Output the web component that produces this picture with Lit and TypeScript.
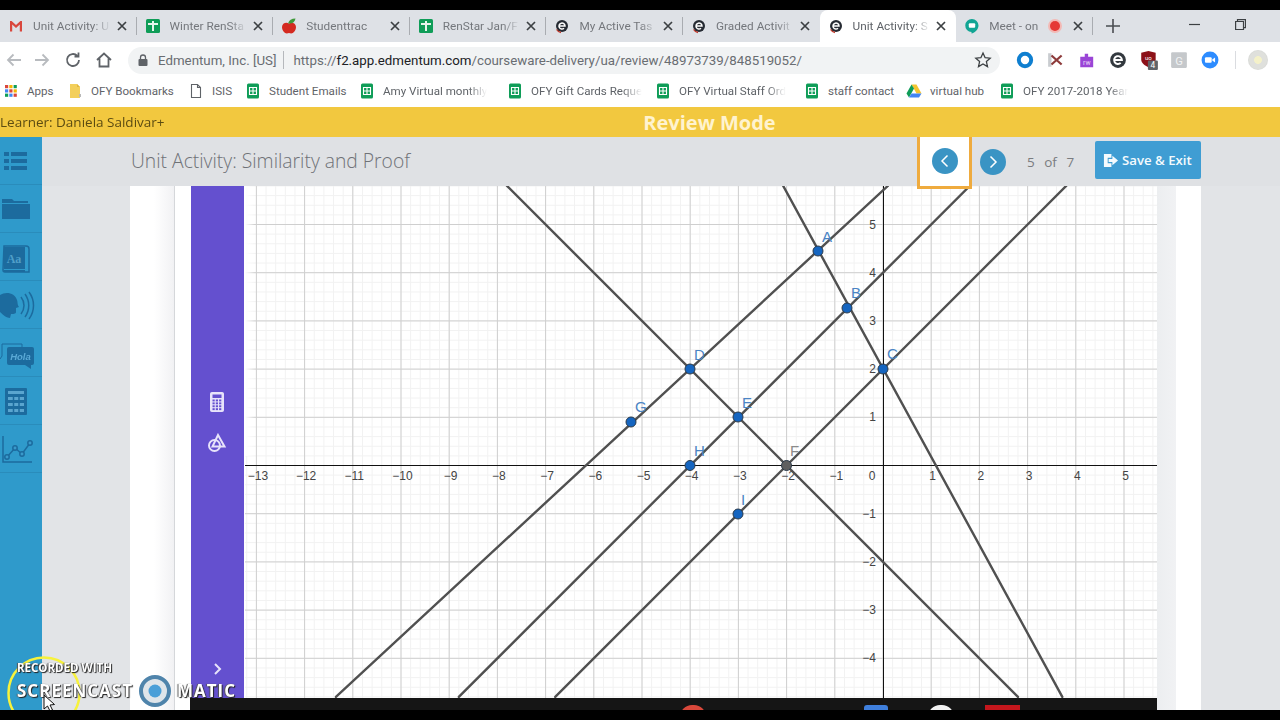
import { LitElement, html, css, svg } from 'lit';
import { customElement } from 'lit/decorators.js';

const sheetTab = svg`<svg viewBox="0 0 16 16" width="16" height="16"><rect x="1" y="1" width="14" height="14" rx="1.5" fill="#0f9d58"/><path d="M3 5h4V3h2v2h4v2H9v6H7V7H3z" fill="#e6f5ec"/></svg>`;
const sheetMark = svg`<svg viewBox="0 0 16 16" width="16" height="16"><rect x="2" y="0.5" width="12" height="15" rx="1.5" fill="#0f9d58"/><path d="M4.5 4.5h7v7h-7zM4.5 8h7M8 4.5v7" fill="none" stroke="#fff" stroke-width="1.1"/></svg>`;
const gmail = svg`<svg viewBox="0 0 16 16" width="16" height="16"><path d="M2 13.5V3h1.6L8 7l4.4-4H14v10.5h-2.2V6.6L8 10 4.2 6.6v6.9z" fill="#d9473d"/></svg>`;
const apple = svg`<svg viewBox="0 0 16 16" width="16" height="16"><path d="M8 5.5C5.5 3.8 1 5 1 9c0 3.4 2.600 6.500 4.800 6.500.9 0 1.400-.4 2.200-.4s1.300.4 2.200.4c2.200 0 4.800-3.100 4.800-6.500 0-4-4.500-5.200-7-3.500z" fill="#d42a20"/><path d="M7 5.500C8 2 10.500.5 14.500.5c-.5 3.500-3 5.500-7.500 5z" fill="#3f9a3a"/></svg>`;
const edm = svg`<svg viewBox="0 0 16 16" width="16" height="16"><circle cx="8" cy="8" r="6" fill="#262b33"/><path d="M5 8h6a3 3 0 1 0-1 2.300" fill="none" stroke="#fff" stroke-width="1.500"/><path d="M2.500 11.500a6.800 6.800 0 0 0 4.500 3" fill="none" stroke="#c0392b" stroke-width="1.300"/></svg>`;
const meet = svg`<svg viewBox="0 0 16 16" width="16" height="16"><path d="M8 1a6.500 6.500 0 0 1 6.500 6.500C14.500 12 10 15 7.500 15.500V14A6.500 6.500 0 0 1 8 1z" fill="#12a594"/><rect x="4.800" y="5.200" width="6.400" height="4.600" rx="1" fill="#fff"/></svg>`;

const tabs = [
  { icon: gmail, title: 'Unit Activity: U' },
  { icon: sheetTab, title: 'Winter RenSta' },
  { icon: apple, title: 'Studenttrac' },
  { icon: sheetTab, title: 'RenStar Jan/F' },
  { icon: edm, title: 'My Active Tas' },
  { icon: edm, title: 'Graded Activit' },
  { icon: edm, title: 'Unit Activity: S', active: true },
  { icon: meet, title: 'Meet - on', rec: true },
];

const folderIcon = svg`<svg viewBox="0 0 16 16" width="16" height="16"><path d="M3 1h7l3 3v11H3z" fill="#f3cf5b"/><path d="M10 1v3h3" fill="#e0b63e"/><rect x="12" y="11" width="2" height="3" fill="#b9b9b9"/></svg>`;
const docIcon = svg`<svg viewBox="0 0 16 16" width="16" height="16"><path d="M3.500 1.500h6l3 3v10h-9zM9.500 1.500v3h3" fill="#fff" stroke="#5f6368" stroke-width="1.100"/></svg>`;
const driveIcon = svg`<svg viewBox="0 0 16 16" width="16" height="16"><path d="M5.500 1.500h5l5 9h-5z" fill="#f4c430"/><path d="M5.500 1.500l-5 9 2.500 4 5-9z" fill="#0f9d58"/><path d="M3 14.500h10l2.500-4h-10z" fill="#4285f4"/></svg>`;
const appsIcon = svg`<svg viewBox="0 0 16 16" width="16" height="16">${[
  '#d9473d', '#f4b400', '#0f9d58', '#4285f4', '#d9473d', '#f4b400', '#0f9d58', '#4285f4', '#d9473d',
].map((c, i) => svg`<rect x=${2 + (i % 3) * 4.3} y=${2 + Math.floor(i / 3) * 4.3} width="3.200" height="3.200" fill=${c}/>`)}</svg>`;

// width is the slot each bookmark takes on the bar
const bookmarks = [
  { icon: appsIcon, title: 'Apps', width: 64 },
  { icon: folderIcon, title: 'OFY Bookmarks', width: 121 },
  { icon: docIcon, title: 'ISIS', width: 57 },
  { icon: sheetMark, title: 'Student Emails', width: 114 },
  { icon: sheetMark, title: 'Amy Virtual monthly', width: 148, fade: true },
  { icon: sheetMark, title: 'OFY Gift Cards Reque', width: 148, fade: true },
  { icon: sheetMark, title: 'OFY Virtual Staff Ord', width: 149, fade: true },
  { icon: sheetMark, title: 'staff contact', width: 102 },
  { icon: driveIcon, title: 'virtual hub', width: 93 },
  { icon: sheetMark, title: 'OFY 2017-2018 Year', width: 130, fade: true },
];

const extensions = [
  svg`<svg viewBox="0 0 16 16" width="18" height="18"><circle cx="8" cy="8" r="5.500" fill="none" stroke="#0f7fd0" stroke-width="3.500"/></svg>`,
  svg`<svg viewBox="0 0 16 16" width="18" height="18"><rect x="1" y="2" width="3" height="12" fill="#c9ccd0"/><path d="M4 4l9 8M13 4l-9 8" stroke="#8d3a3a" stroke-width="2"/></svg>`,
  svg`<svg viewBox="0 0 16 16" width="18" height="18"><path d="M2 5h4V2.500h3V5h4.500v9.500H2z" fill="#9a45d6"/><text x="7.800" y="12" font-size="6" text-anchor="middle" fill="#e9d5f7" font-family="Roboto, sans-serif">rw</text></svg>`,
  svg`<svg viewBox="0 0 16 16" width="18" height="18"><circle cx="8" cy="8" r="7" fill="#33393f"/><path d="M4.500 8h7a3.500 3.500 0 1 0-1.100 2.600" fill="none" stroke="#fff" stroke-width="1.700"/></svg>`,
  svg`<svg viewBox="0 0 16 18" width="18" height="20"><path d="M1 2.500L7.500 1 14 2.500v6c0 3-3 5.500-6.500 7C4 14 1 11.500 1 8.500z" fill="#8c1119"/><text x="7.500" y="9" font-size="5.500" text-anchor="middle" fill="#fff" font-family="Roboto, sans-serif">uo</text><rect x="7" y="9.500" width="9" height="8.500" rx="1" fill="#5f6368"/><text x="11.500" y="16.500" font-size="7.500" text-anchor="middle" fill="#fff" font-family="Roboto, sans-serif">4</text></svg>`,
  svg`<svg viewBox="0 0 16 16" width="18" height="18"><rect x="1" y="1" width="14" height="14" rx="1" fill="#c5c8cb"/><text x="8" y="12" font-size="10" text-anchor="middle" fill="#f1f3f4" font-family="Roboto, sans-serif">G</text></svg>`,
  svg`<svg viewBox="0 0 16 16" width="18" height="18"><circle cx="8" cy="8" r="7.500" fill="#2d8cff"/><rect x="3.500" y="5.500" width="6" height="5" rx="1" fill="#fff"/><path d="M10 7.500l2.500-1.700v4.400L10 8.500z" fill="#fff"/></svg>`,
];

const X_ZERO = 883;
const Y_ZERO = 465.5;
const UNIT = 48.2;
const px = (x: number) => X_ZERO + x * UNIT;
const py = (y: number) => Y_ZERO - y * UNIT;
const range = (from: number, to: number, step = 1) => {
  const out: number[] = [];
  for (let v = from; v <= to + 1e-6; v += step) out.push(v);
  return out;
};

const drawn = [
  [-11.35, -4.8, 0.1, 5.8],
  [-8.8, -4.8, 1.8, 5.8],
  [-6.8, -4.8, 3.8, 5.8],
  [-7.8, 5.8, 2.8, -4.8],
  [-2.07, 5.8, 3.72, -4.8],
];

const points = [
  { n: 'A', x: 818, y: 251, lx: 822, ly: 242 },
  { n: 'B', x: 847, y: 308, lx: 851, ly: 298 },
  { n: 'C', x: 883, y: 369, lx: 887, ly: 359 },
  { n: 'D', x: 690, y: 369, lx: 694, ly: 360 },
  { n: 'E', x: 738, y: 417, lx: 742, ly: 408 },
  { n: 'F', x: 786.500, y: 465.500, lx: 790, ly: 456, grey: true },
  { n: 'G', x: 631, y: 422, lx: 635, ly: 412 },
  { n: 'H', x: 690, y: 465.500, lx: 694, ly: 456 },
  { n: 'I', x: 738, y: 514, lx: 741, ly: 505 },
];

// tops of the video's taskbar icons that peek in under the graph
const peeks = [
  { left: 490, width: 26, kind: 'peek-red' },
  { left: 674, width: 24, kind: 'peek-blue' },
  { left: 738, width: 26, kind: 'peek-white' },
  { left: 795, width: 35, kind: 'peek-rect' },
];

const minus = (v: number) => (v < 0 ? `\u2212${-v}` : `${v}`);

@customElement('app-root')
export class AppRoot extends LitElement {
  static styles = css`
    :host {
      display: block;
      width: 1280px;
      height: 720px;
      overflow: hidden;
      background: #000;
      font-family: Roboto, 'Liberation Sans', sans-serif;
    }
    .page {
      position: relative;
      display: flex;
      flex-direction: column;
      height: 720px;
      padding: 10px 0;
      box-sizing: border-box;
      filter: blur(0.5px);
    }

    /* browser chrome */
    .tabs {
      display: flex;
      align-items: center;
      height: 32px;
      background: #dee1e6;
      flex: none;
    }
    .tab {
      display: flex;
      align-items: center;
      box-sizing: border-box;
      width: 136.600px;
      height: 32px;
      padding: 0 10px 0 8px;
      font-size: 11.800px;
      color: #74777c;
      position: relative;
    }
    .tab::after {
      content: '';
      position: absolute;
      right: 0;
      top: 7px;
      bottom: 7px;
      width: 1px;
      background: #a9acb1;
    }
    .tab.active {
      background: #fff;
      border-radius: 8px 8px 0 0;
      color: #5f6368;
    }
    .tab.active::after,
    .tab.before-active::after {
      display: none;
    }
    .tab svg {
      flex: none;
    }
    .tab-title {
      flex: 1;
      min-width: 0;
      margin-left: 9px;
      white-space: nowrap;
      -webkit-mask-image: linear-gradient(90deg, #000 78%, transparent 100%);
      mask-image: linear-gradient(90deg, #000 78%, transparent 100%);
    }
    .close {
      flex: none;
      width: 10px;
      height: 10px;
      margin-left: 6px;
      stroke: #3c4043;
      stroke-width: 1.700;
    }
    .rec {
      flex: none;
      width: 10px;
      height: 10px;
      border-radius: 50%;
      background: #e53935;
      box-shadow: 0 0 0 2px #f3b9b5;
      margin-right: 7px;
    }
    .new-tab {
      margin-left: 13px;
      width: 14px;
      height: 14px;
      stroke: #4a4d52;
      stroke-width: 1.600;
    }
    .win {
      margin-left: auto;
      display: flex;
      align-items: center;
      gap: 35px;
      padding: 0 34px 4px 0;
    }
    .win svg {
      width: 11px;
      height: 11px;
      fill: none;
      stroke: #3c4043;
      stroke-width: 1.200;
    }
    .toolbar {
      display: flex;
      align-items: center;
      flex: none;
      height: 34px;
      box-sizing: border-box;
      padding: 2px 0 0 5px;
      background: #fff;
    }
    .nav-icon {
      flex: none;
      width: 18px;
      height: 18px;
      fill: none;
      stroke: #5f6368;
      stroke-width: 1.800;
    }
    .nav-icon.dim {
      stroke: #b8bbbf;
    }
    .forward {
      margin-left: 10px;
    }
    .reload,
    .home {
      margin-left: 13px;
    }
    .omnibox {
      display: flex;
      align-items: center;
      width: 872px;
      height: 27px;
      margin-left: 15px;
      border-radius: 14px;
      background: #f1f3f4;
      font-size: 13.300px;
      color: #696d72;
      white-space: nowrap;
      box-sizing: border-box;
      padding-left: 10px;
    }
    .lock {
      flex: none;
      margin-right: 10px;
    }
    .omni-sep {
      width: 1px;
      height: 18px;
      background: #b5b8bc;
      margin: 0 9px 0 7px;
    }
    .host {
      color: #202124;
    }
    .star {
      margin-left: auto;
      margin-right: 8px;
      stroke: #3c4043;
      stroke-width: 1.300;
    }
    .ext {
      display: flex;
      align-items: center;
      margin-left: 10px;
    }
    .ext-slot {
      width: 30.800px;
      display: flex;
      justify-content: center;
    }
    .ext-sep {
      width: 1px;
      height: 18px;
      background: #dadce0;
      margin: 0 12px 0 9px;
    }
    .avatar {
      width: 20px;
      height: 20px;
      border-radius: 50%;
      background: radial-gradient(circle, #f4f1c9 0 25%, #dfe0dc 30% 60%, #bfc3c4 100%);
    }
    .bookmarks {
      display: flex;
      align-items: center;
      flex: none;
      height: 31px;
      box-sizing: border-box;
      padding: 0 0 2px 3px;
      background: #fff;
      font-size: 11.600px;
      color: #5f6368;
    }
    .bookmark {
      display: flex;
      align-items: center;
      flex: none;
      white-space: nowrap;
    }
    .bookmark svg {
      flex: none;
    }
    .bookmark span {
      margin-left: 8px;
    }
    .bookmark span.fade {
      -webkit-mask-image: linear-gradient(90deg, #000 82%, transparent 100%);
      mask-image: linear-gradient(90deg, #000 82%, transparent 100%);
    }

    /* review banner */
    .banner {
      position: relative;
      display: flex;
      align-items: center;
      justify-content: center;
      flex: none;
      height: 30px;
      background: #f2c83f;
      font-family: 'Open Sans', sans-serif;
    }
    .learner {
      position: absolute;
      left: 0;
      top: 6px;
      font-size: 13.500px;
      color: #5c4c12;
    }
    .mode {
      margin-left: 139px;
      font-size: 20px;
      font-weight: 700;
      color: #fff3cf;
    }

    /* courseware */
    .main {
      flex: 1;
      min-height: 0;
      display: flex;
    }
    .rail {
      flex: none;
      width: 41.500px;
      background: #2f9acb;
      overflow: hidden;
    }
    .rail-row {
      height: 48px;
      border-bottom: 1px solid #2a8cbb;
      box-sizing: border-box;
    }
    .rail-row svg {
      display: block;
      width: 41px;
      height: 47px;
    }
    .work {
      flex: 1;
      min-width: 0;
      display: flex;
      flex-direction: column;
      background: #e2e4e7;
    }
    .head {
      display: flex;
      align-items: center;
      flex: none;
      height: 49px;
      box-sizing: border-box;
      padding: 0 79px 0 89.500px;
      background: #dfe1e4;
      font-family: 'Open Sans', sans-serif;
      color: #7b7e83;
    }
    .title {
      font-size: 19.300px;
      font-weight: 300;
      color: #6f7277;
      margin-top: -2px;
    }
    .pager {
      margin-left: auto;
      display: flex;
      align-items: center;
    }
    .prev-box {
      position: relative;
      z-index: 1;
      display: flex;
      align-items: center;
      justify-content: center;
      width: 55px;
      height: 52px;
      margin-bottom: -2px;
      box-sizing: border-box;
      background: #fff;
      border: 3px solid #efab3e;
      border-top: none;
    }
    .round {
      width: 26px;
      height: 26px;
      border-radius: 50%;
      background: #3a94c4;
      display: flex;
      align-items: center;
      justify-content: center;
    }
    .round svg {
      width: 14px;
      height: 14px;
      fill: none;
      stroke: #fff;
      stroke-width: 1.500;
    }
    .next {
      margin-left: 8px;
    }
    .count {
      margin-left: 21px;
      width: 68px;
      font-size: 13.500px;
      word-spacing: 6px;
      color: #7a7c80;
    }
    .save {
      display: flex;
      align-items: center;
      gap: 4px;
      width: 106px;
      height: 38px;
      box-sizing: border-box;
      padding-left: 8px;
      background: #3f9dd3;
      border-radius: 2px;
      color: #f4fafd;
      font-size: 13.200px;
      font-weight: 600;
      margin-top: -3px;
    }
    .save svg {
      width: 15px;
      height: 15px;
      fill: #f4fafd;
    }
    .body {
      flex: 1;
      min-height: 0;
      display: flex;
    }
    .gap-left {
      flex: none;
      width: 88.500px;
    }
    .panel-left {
      flex: none;
      width: 60px;
      background: linear-gradient(90deg, #fff 0 40%, #f2f2f4 72%, #f0f0f3 73%) no-repeat;
      position: relative;
    }
    .panel-left::after {
      content: '';
      position: absolute;
      left: 44px;
      top: 0;
      bottom: 0;
      width: 16px;
      border-left: 1px solid #d5d7da;
      background: #fff;
    }
    .stage {
      flex: none;
      width: 967px;
      display: flex;
      flex-direction: column;
    }
    .stage-top {
      flex: none;
      height: 512px;
      display: flex;
      justify-content: space-between;
      background: #fff;
    }
    .tools {
      flex: none;
      width: 54px;
      display: flex;
      flex-direction: column;
      align-items: center;
      background: #6450cf;
      padding-top: 206px;
      box-sizing: border-box;
    }
    .tools svg {
      flex: none;
      fill: none;
      stroke: #e7e3fa;
    }
    .tool-gap {
      margin-top: 21px;
    }
    .tool-next {
      margin-top: 210px;
    }
    .calc-key {
      fill: #6450cf;
      stroke: none;
    }
    .graph {
      display: block;
      flex: none;
      width: 912px;
      height: 512px;
      background: #fff;
    }
    .graph text {
      font-family: 'Liberation Sans', sans-serif;
    }
    .axis-label {
      font-size: 12px;
      fill: #444;
    }
    .pt-label {
      font-size: 15px;
      fill: #4a84c4;
    }
    .pt-label.grey {
      fill: #8a8a8a;
    }
    .foot {
      flex: 1;
      background: #151515;
      position: relative;
      overflow: hidden;
    }
    .foot span {
      position: absolute;
      top: 7px;
      height: 12px;
    }
    .peek-red {
      background: #d9483b;
      border-radius: 13px 13px 0 0;
    }
    .peek-blue {
      background: #3f7fdc;
      border-radius: 3px 3px 0 0;
    }
    .peek-white {
      background: #f2f2f2;
      border-radius: 13px 13px 0 0;
    }
    .peek-rect {
      background: #c4161c;
    }
    .gutter {
      flex: none;
      width: 19px;
      background: linear-gradient(90deg, #eceef0, #f1f2f4);
    }
    .panel-right {
      flex: none;
      width: 25px;
      background: #fff;
    }

    /* recorder watermark, lies over the page */
    .mark {
      position: absolute;
      left: 0;
      top: 650px;
      width: 250px;
      height: 60px;
      overflow: hidden;
      color: #fff;
      font-family: 'Open Sans', sans-serif;
      font-weight: 700;
      text-shadow: 1px 1px 1px #222, -1px 0 1px #555;
    }
    .mark svg {
      position: absolute;
      left: 0;
      top: 0;
    }
    .mark-small {
      position: absolute;
      left: 17px;
      top: 10px;
      font-size: 11.500px;
      line-height: 16px;
    }
    .mark-big {
      position: absolute;
      top: 29px;
      font-size: 17px;
      line-height: 24px;
      letter-spacing: 1px;
    }
    .mark-left {
      left: 17px;
    }
    .mark-right {
      left: 177px;
    }
  `;

  private tabStrip() {
    return tabs.map(
      (t, i) => html`<div class="tab ${t.active ? 'active' : ''} ${tabs[i + 1]?.active ? 'before-active' : ''}">
        ${t.icon}
        <span class="tab-title">${t.title}</span>
        ${t.rec ? html`<span class="rec"></span>` : ''}
        <svg class="close" viewBox="0 0 10 10"><path d="M1 1l8 8M9 1l-8 8"/></svg>
      </div>`,
    );
  }

  private railIcons() {
    const c = '#1c6b9e';
    return [
      svg`<g fill=${c}><rect x="4" y="15" width="5" height="4"/><rect x="11" y="15" width="16" height="4"/><rect x="4" y="22" width="5" height="4"/><rect x="11" y="22" width="16" height="4"/><rect x="4" y="29" width="5" height="4"/><rect x="11" y="29" width="16" height="4"/></g>`,
      svg`<path d="M3 14h9l2 2h14v2H2v-4zM2 19h28v15H2z" fill=${c}/>`,
      svg`<path d="M4 13h22c2 0 3 1 3 3v23H5c-1 0-2-1-2-2z" fill="none" stroke=${c} stroke-width="1.500"/><rect x="4" y="14" width="21" height="22" fill=${c}/><rect x="4" y="37" width="21" height="2" fill=${c}/><text x="14" y="30" font-size="12" font-weight="700" text-anchor="middle" fill="#4f9ec8" font-family="Liberation Serif, serif">Aa</text>`,
      svg`<path d="M0 14c6-4 15-2 17 5 1 3 0 4 2 7l-3 1v4c0 2-3 2-5 2l-1 4c-3 0-7-3-10-6z" fill=${c}/><path d="M21 16c4 5 4 12 0 17M25 13c5 7 5 16 0 23M29 11c6 8 6 19 0 27" fill="none" stroke=${c} stroke-width="1.500"/>`,
      svg`<path d="M2 15h20v4M2 15v12l-2 3" fill="none" stroke=${c} stroke-width="1"/><rect x="7" y="18" width="27" height="18" rx="2" fill=${c}/><path d="M25 36h6v4z" fill=${c}/><text x="20.500" y="30.500" font-size="9.500" font-weight="700" font-style="italic" text-anchor="middle" fill="#5aa9d6" font-family="Liberation Sans, sans-serif">Hola</text>`,
      svg`<rect x="5" y="11" width="22" height="27" rx="1" fill=${c}/><g fill="#5aa5cf"><rect x="8" y="14" width="16" height="3"/><rect x="8" y="20" width="16" height="3"/><rect x="8" y="26" width="16" height="3"/><rect x="8" y="32" width="16" height="3"/></g><path d="M13.500 20v15M19 20v15" stroke=${c} stroke-width="1.500"/>`,
      svg`<path d="M3 11v26h29" fill="none" stroke=${c} stroke-width="1.500"/><path d="M7 32l8-9 7 6 8-11" fill="none" stroke=${c} stroke-width="1.500"/><g fill="#3a9acb" stroke=${c} stroke-width="1.500"><circle cx="7" cy="32" r="2.200"/><circle cx="15" cy="23" r="2.200"/><circle cx="22" cy="29" r="2.200"/><circle cx="30" cy="18" r="2.200"/></g>`,
    ];
  }

  private graph() {
    const minorX = range(-13.2, 5.8, 0.2);
    const minorY = range(-5, 6, 0.2);
    const majorX = range(-13, 5);
    const majorY = range(-4, 5);
    return svg`<svg class="graph" viewBox="245 186 912 512">
      <g stroke="#f2f2f2" stroke-width="1">
        ${minorX.map((v) => svg`<line x1=${px(v)} x2=${px(v)} y1="186" y2="698"/>`)}
        ${minorY.map((v) => svg`<line y1=${py(v)} y2=${py(v)} x1="245" x2="1157"/>`)}
      </g>
      <g stroke="#cfcfcf" stroke-width="1">
        ${majorX.map((v) => svg`<line x1=${px(v)} x2=${px(v)} y1="186" y2="698"/>`)}
        ${majorY.map((v) => svg`<line y1=${py(v)} y2=${py(v)} x1="245" x2="1157"/>`)}
      </g>
      <path d="M245 465.500H1157M883.500 186V698" stroke="#111" stroke-width="1" fill="none"/>
      ${majorX.filter((v) => v !== 0).map(
        (v) => svg`<text class="axis-label" x=${px(v) + 1.5} y="480" text-anchor="middle">${minus(v)}</text>`,
      )}
      <text class="axis-label" x="872" y="480" text-anchor="middle">0</text>
      ${majorY.filter((v) => v !== 0).map(
        (v) => svg`<text class="axis-label" x="876" y=${py(v) + 4} text-anchor="end">${minus(v)}</text>`,
      )}
      <g stroke="#505050" stroke-width="2.400" stroke-linecap="round">
        ${drawn.map(([a, b, c, d]) => svg`<line x1=${px(a)} y1=${py(b)} x2=${px(c)} y2=${py(d)}/>`)}
      </g>
      ${points.map(
        (p) => svg`<circle cx=${p.x} cy=${p.y} r="5" fill=${p.grey ? '#5f5f5f' : '#1565c0'} stroke="#2b3a4a" stroke-width="1"/>
          <text class="pt-label ${p.grey ? 'grey' : ''}" x=${p.lx} y=${p.ly}>${p.n}</text>`,
      )}
      <defs><linearGradient id="edge"><stop offset="0" stop-color="#fff"/><stop offset="1" stop-color="#fff" stop-opacity="0"/></linearGradient></defs>
      <rect x="245" y="186" width="10" height="270" fill="url(#edge)"/>
    </svg>`;
  }

  render() {
    return html`<div class="page">
      <div class="tabs">
        ${this.tabStrip()}
        <svg class="new-tab" viewBox="0 0 14 14"><path d="M7 0v14M0 7h14"/></svg>
        <div class="win">
          <svg viewBox="0 0 11 11"><path d="M0 5.500h11"/></svg>
          <svg viewBox="0 0 11 11"><path d="M.6 2.500h7.900v8H.6zM2.500 2.500V.6h8v8H8.500"/></svg>
        </div>
      </div>

      <div class="toolbar">
        <svg class="nav-icon dim" viewBox="0 0 18 18"><path d="M16 9H3M8.500 3.500L3 9l5.500 5.500"/></svg>
        <svg class="nav-icon dim forward" viewBox="0 0 18 18"><path d="M2 9h13M9.500 3.500L15 9l-5.500 5.500"/></svg>
        <svg class="nav-icon reload" viewBox="0 0 18 18"><path d="M15 9a6 6 0 1 1-1.800-4.300M14.500 1.500v4h-4"/></svg>
        <svg class="nav-icon home" viewBox="0 0 18 18"><path d="M2 9l7-6.500L16 9M4.500 7.500V15.500h9V7.500"/></svg>
        <div class="omnibox">
          <svg class="lock" width="10" height="12" viewBox="0 0 10 12"><rect x="0.500" y="5" width="9" height="7" rx="1" fill="#5f6368"/><path d="M2.500 5V3.500a2.500 2.500 0 0 1 5 0V5" fill="none" stroke="#5f6368" stroke-width="1.300"/></svg>
          <span>Edmentum, Inc. [US]</span>
          <span class="omni-sep"></span>
          <span>https://<span class="host">f2.app.edmentum.com</span>/courseware-delivery/ua/review/48973739/848519052/</span>
          <svg class="nav-icon star" viewBox="0 0 18 18"><path d="M9 2l2.100 4.700 5.100.5-3.800 3.400 1.100 5L9 13l-4.500 2.600 1.100-5L1.800 7.200l5.100-.5z"/></svg>
        </div>
        <div class="ext">
          ${extensions.map((e) => html`<div class="ext-slot">${e}</div>`)}
          <span class="ext-sep"></span>
          <span class="avatar"></span>
        </div>
      </div>

      <div class="bookmarks">
        ${bookmarks.map(
          (b) => html`<div class="bookmark" style="width:${b.width}px">${b.icon}<span class=${b.fade ? 'fade' : ''}>${b.title}</span></div>`,
        )}
      </div>

      <div class="banner">
        <span class="learner">Learner: Daniela Saldivar+</span>
        <span class="mode">Review Mode</span>
      </div>

      <div class="main">
        <div class="rail">
          ${this.railIcons().map(
            (icon) => html`<div class="rail-row"><svg viewBox="0 0 41 47">${icon}</svg></div>`,
          )}
        </div>
        <div class="work">
          <div class="head">
            <span class="title">Unit Activity: Similarity and Proof</span>
            <div class="pager">
              <div class="prev-box">
                <span class="round"><svg viewBox="0 0 14 14"><path d="M9.500 1.500L4 7l5.500 5.500"/></svg></span>
              </div>
              <span class="round next"><svg viewBox="0 0 14 14"><path d="M4.500 1.500L10 7l-5.500 5.500"/></svg></span>
              <span class="count">5 of 7</span>
              <div class="save">
                <svg viewBox="0 0 16 16"><path d="M1 1h8v4H5v6h4v4H1zM6 6.500h4V3l6 5-6 5V9.500H6z"/></svg>
                Save &amp; Exit
              </div>
            </div>
          </div>
          <div class="body">
            <div class="gap-left"></div>
            <div class="panel-left"></div>
            <div class="stage">
              <div class="stage-top">
                <div class="tools">
                  <svg width="14" height="20" viewBox="0 0 14 20"><rect x="0.500" y="0.500" width="13" height="19" rx="1" fill="#e7e3fa"/><rect class="calc-key" x="2.500" y="2.500" width="9" height="3.500"/>${range(0, 3).map((r) => range(0, 2).map((c) => svg`<rect class="calc-key" x=${2.5 + c * 3.3} y=${7.5 + r * 2.9} width="2.200" height="1.900"/>`))}</svg>
                  <svg class="tool-gap" width="20" height="20" viewBox="0 0 20 20" stroke-width="2"><circle cx="7.500" cy="12.500" r="5.500"/><path d="M11 2l6.500 11.500H5.500z"/></svg>
                  <svg class="tool-next" width="9" height="12" viewBox="0 0 9 12" stroke-width="2"><path d="M2 1l5 5-5 5"/></svg>
                </div>
                ${this.graph()}
              </div>
              <div class="foot">
                ${peeks.map((p) => html`<span class=${p.kind} style="left:${p.left}px;width:${p.width}px"></span>`)}
              </div>
            </div>
            <div class="gutter"></div>
            <div class="panel-right"></div>
          </div>
        </div>
      </div>

      <div class="mark">
        <svg width="250" height="60" viewBox="0 650 250 60">
          <circle cx="44" cy="693" r="35.500" fill="none" stroke="#f7f23c" stroke-width="2.500"/>
          <circle cx="155" cy="691" r="14" fill="#dfe5ea" stroke="#4f84ab" stroke-width="4"/>
          <circle cx="155" cy="691" r="6.500" fill="#4a9fd8"/>
          <path d="M44 695v14l3.500-3 2.500 5 2.500-1-2.500-5 4.500-.5z" fill="#fff" stroke="#111" stroke-width="1"/>
        </svg>
        <span class="mark-small">RECORDED WITH</span>
        <span class="mark-big mark-left">SCREENCAST</span>
        <span class="mark-big mark-right">MATIC</span>
      </div>
    </div>`;
  }
}
